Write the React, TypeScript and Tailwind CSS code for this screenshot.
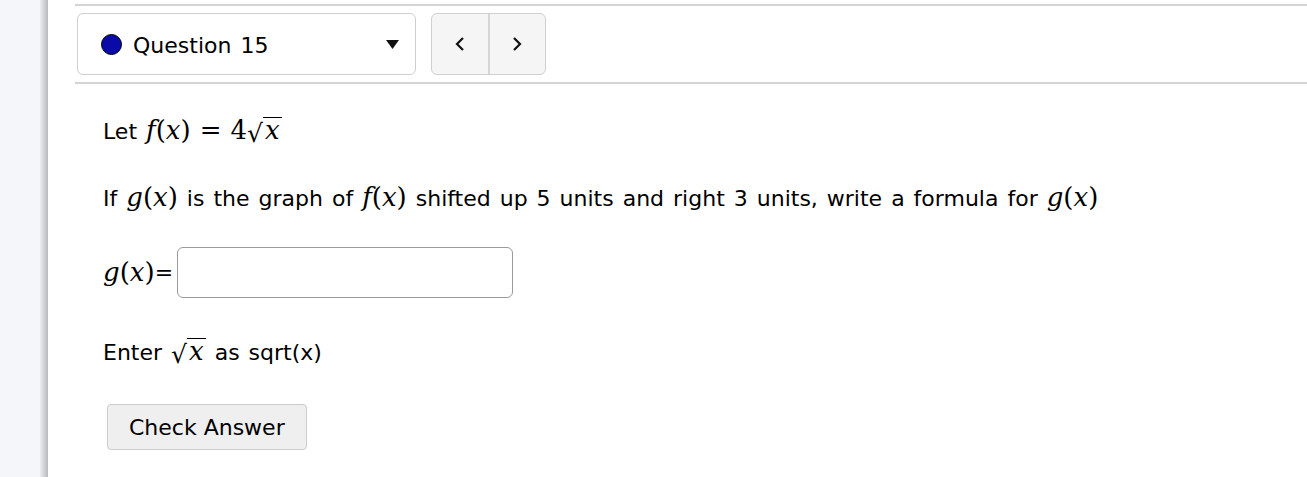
import React from 'react';

const sans = { fontFamily: '"DejaVu Sans", Verdana, sans-serif' };

const V: React.FC<{ children: React.ReactNode }> = ({ children }) => (
  <i className="font-['DejaVu_Serif',serif] italic text-[26px] [word-spacing:0]">{children}</i>
);

const R: React.FC<{ children: React.ReactNode }> = ({ children }) => (
  <span className="font-['DejaVu_Serif',serif] text-[26px] [word-spacing:0]">{children}</span>
);

const Sqrt: React.FC<{ children: React.ReactNode }> = ({ children }) => (
  <span className="inline-flex items-end font-['DejaVu_Serif',serif] text-[25px]">
    <span className="relative top-[3px] leading-none">√</span>
    <span className="border-t-[1.5px] border-black px-[2px] leading-[24px]">{children}</span>
  </span>
);

const Fn: React.FC<{ name: string }> = ({ name }) => (
  <span className="whitespace-nowrap">
    <V>{name}</V>
    <R>(</R>
    <V>x</V>
    <R>)</R>
  </span>
);

export default function App() {
  return (
    <div className="flex h-[477px] w-full overflow-hidden bg-white text-black [word-spacing:2px]" style={sans}>
      <div className="w-[40px] bg-[#f5f6fa]" />
      <div className="w-[8px] bg-gradient-to-r from-[#eceef2] to-[#b9b9bb]" />
      <div className="flex-1 pl-[27px] pt-[4px]">
        {/* Question header */}
        <div className="flex items-center border-y-2 border-[#d4d4d4] py-[7px] pl-[2px]">
          <div className="flex h-[62px] w-[339px] items-center rounded-md border border-[#cfcfcf] pl-[23px] pr-[16px]">
            <span className="h-[21px] w-[21px] rounded-full border border-black bg-[#0a0aa8]" />
            <span className="ml-[11px] pt-[3px] text-[22px]">Question 15</span>
            <svg className="ml-auto" width="13" height="9" viewBox="0 0 13 9">
              <path d="M0 0 H13 L6.5 9 Z" fill="#111" />
            </svg>
          </div>
          <div className="ml-[15px] flex h-[62px] w-[115px] overflow-hidden rounded-md border border-[#cfcfcf] bg-[#f5f5f5]">
            <button className="flex flex-1 items-center justify-center border-r-2 border-[#d6d6d6]">
              <svg width="10" height="16" viewBox="0 0 10 16">
                <path d="M8 2 L2 8 L8 14" fill="none" stroke="#111" strokeWidth="2.2" />
              </svg>
            </button>
            <button className="flex flex-1 items-center justify-center">
              <svg width="10" height="16" viewBox="0 0 10 16">
                <path d="M2 2 L8 8 L2 14" fill="none" stroke="#111" strokeWidth="2.2" />
              </svg>
            </button>
          </div>
        </div>

        {/* Question body */}
        <div className="pl-[28px] text-[22px]">
          <p className="mt-[28px] h-[36px] leading-[36px]">
            Let <Fn name="f" /> <R>=</R> <R>4</R>
            <Sqrt>
              <V>x</V>
            </Sqrt>
          </p>
          <p className="mt-[31px] h-[36px] leading-[36px]">
            If <Fn name="g" /> is the graph of <Fn name="f" /> shifted up 5 units and right 3 units, write a formula for{' '}
            <Fn name="g" />
          </p>
          <div className="mt-[32px] flex items-center">
            <Fn name="g" />
            <span>=</span>
            <input
              className="ml-[4px] h-[51px] w-[336px] rounded-md border-[1.5px] border-[#9a9a9a] outline-none"
              type="text"
            />
          </div>
          <p className="mt-[37px] h-[36px] leading-[36px]">
            Enter{' '}
            <Sqrt>
              <V>x</V>
            </Sqrt>{' '}
            as sqrt(x)
          </p>
          <button className="ml-[4px] mt-[33px] h-[46px] rounded-[4px] border border-[#cccccc] bg-[#efefef] px-[21px] text-[22px]">
            Check Answer
          </button>
        </div>
      </div>
    </div>
  );
}
